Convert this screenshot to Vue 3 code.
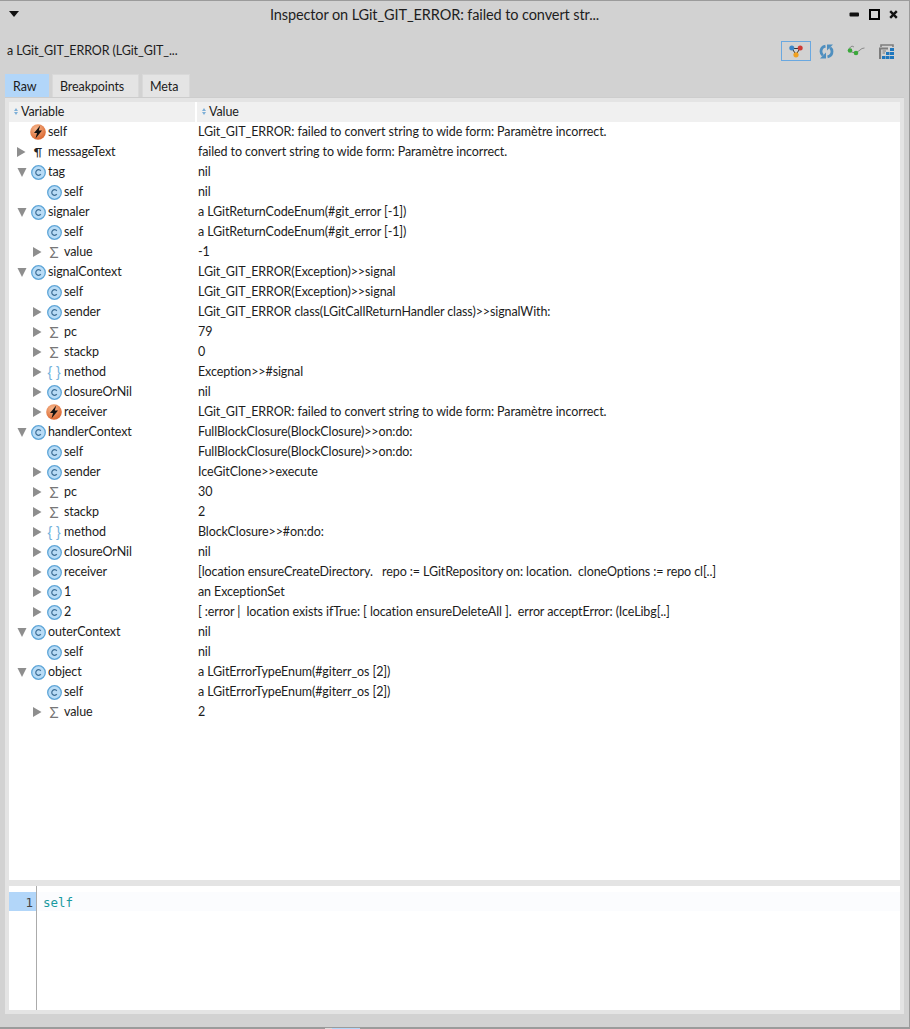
<script setup>
const rows = [
  { l: 0, a: '', i: 'err', n: 'self', v: 'LGit_GIT_ERROR: failed to convert string to wide form: Paramètre incorrect.' },
  { l: 0, a: 'r', i: 'para', n: 'messageText', v: 'failed to convert string to wide form: Paramètre incorrect.' },
  { l: 0, a: 'd', i: 'c', n: 'tag', v: 'nil' },
  { l: 1, a: '', i: 'c', n: 'self', v: 'nil' },
  { l: 0, a: 'd', i: 'c', n: 'signaler', v: 'a LGitReturnCodeEnum(#git_error [-1])' },
  { l: 1, a: '', i: 'c', n: 'self', v: 'a LGitReturnCodeEnum(#git_error [-1])' },
  { l: 1, a: 'r', i: 'sum', n: 'value', v: '-1' },
  { l: 0, a: 'd', i: 'c', n: 'signalContext', v: 'LGit_GIT_ERROR(Exception)>>signal' },
  { l: 1, a: '', i: 'c', n: 'self', v: 'LGit_GIT_ERROR(Exception)>>signal' },
  { l: 1, a: 'r', i: 'c', n: 'sender', v: 'LGit_GIT_ERROR class(LGitCallReturnHandler class)>>signalWith:' },
  { l: 1, a: 'r', i: 'sum', n: 'pc', v: '79' },
  { l: 1, a: 'r', i: 'sum', n: 'stackp', v: '0' },
  { l: 1, a: 'r', i: 'br', n: 'method', v: 'Exception>>#signal' },
  { l: 1, a: 'r', i: 'c', n: 'closureOrNil', v: 'nil' },
  { l: 1, a: 'r', i: 'err', n: 'receiver', v: 'LGit_GIT_ERROR: failed to convert string to wide form: Paramètre incorrect.' },
  { l: 0, a: 'd', i: 'c', n: 'handlerContext', v: 'FullBlockClosure(BlockClosure)>>on:do:' },
  { l: 1, a: '', i: 'c', n: 'self', v: 'FullBlockClosure(BlockClosure)>>on:do:' },
  { l: 1, a: 'r', i: 'c', n: 'sender', v: 'IceGitClone>>execute' },
  { l: 1, a: 'r', i: 'sum', n: 'pc', v: '30' },
  { l: 1, a: 'r', i: 'sum', n: 'stackp', v: '2' },
  { l: 1, a: 'r', i: 'br', n: 'method', v: 'BlockClosure>>#on:do:' },
  { l: 1, a: 'r', i: 'c', n: 'closureOrNil', v: 'nil' },
  { l: 1, a: 'r', i: 'c', n: 'receiver', v: '[location ensureCreateDirectory.   repo := LGitRepository on: location.  cloneOptions := repo cl[..]' },
  { l: 1, a: 'r', i: 'c', n: '1', v: 'an ExceptionSet' },
  { l: 1, a: 'r', i: 'c', n: '2', v: '[ :error |  location exists ifTrue: [ location ensureDeleteAll ].  error acceptError: (IceLibg[..]' },
  { l: 0, a: 'd', i: 'c', n: 'outerContext', v: 'nil' },
  { l: 1, a: '', i: 'c', n: 'self', v: 'nil' },
  { l: 0, a: 'd', i: 'c', n: 'object', v: 'a LGitErrorTypeEnum(#giterr_os [2])' },
  { l: 1, a: '', i: 'c', n: 'self', v: 'a LGitErrorTypeEnum(#giterr_os [2])' },
  { l: 1, a: 'r', i: 'sum', n: 'value', v: '2' },
]
const indent = (r) => ({ paddingLeft: 5 + r.l * 16 + 'px' })
</script>

<template>
  <div class="window">
    <header class="titlebar">
      <svg class="menu" width="12" height="7" viewBox="0 0 12 7"><path d="M1 0h10L6 6z" fill="#111" /></svg>
      <div class="title">Inspector on LGit_GIT_ERROR: failed to convert str...</div>
      <div class="controls">
        <svg width="11" height="5" viewBox="0 0 11 5"><rect x="0.5" y="0.5" width="9.5" height="4" rx="1" fill="#111" /></svg>
        <svg width="11" height="11" viewBox="0 0 11 11"><rect x="1" y="1" width="9" height="9" fill="none" stroke="#000" stroke-width="2" /></svg>
        <svg width="9" height="9" viewBox="0 0 9 9"><path d="M1.2 1.2l6.600 6.600M7.800 1.2L1.2 7.800" stroke="#111" stroke-width="2.400" /></svg>
      </div>
    </header>

    <div class="toolbar">
      <div class="subject">a LGit_GIT_ERROR (LGit_GIT_...</div>
      <div class="tools">
        <div class="tool active">
          <svg width="14" height="13" viewBox="0 0 14 13">
            <path d="M3 3.500h8M3 3.500l4 6M11 3.500l-4 6" stroke="#333" stroke-width="1" fill="none" />
            <circle cx="2.800" cy="3" r="2.500" fill="#3a86c8" />
            <circle cx="11.200" cy="3" r="2.500" fill="#cf3a34" />
            <circle cx="7" cy="9.800" r="2.600" fill="#f0a020" />
          </svg>
        </div>
        <svg class="t-sync" width="15" height="15" viewBox="0 0 15 15">
          <path d="M6.500 2.200C3.500 2.800 2 4.900 2 7.500c0 1.600.7 3 1.900 3.900" fill="none" stroke="#4f8fbf" stroke-width="2.800" />
          <path d="M1 14.500h6V8.500z" fill="#4f8fbf" />
          <path d="M8.500 12.800c3-.6 4.500-2.700 4.500-5.300 0-1.600-.7-3-1.900-3.900" fill="none" stroke="#4f8fbf" stroke-width="2.800" />
          <path d="M14 .5H8v6z" fill="#4f8fbf" />
        </svg>
        <svg class="t-glass" width="18" height="12" viewBox="0 0 18 12">
          <path d="M2 3.500L5 1l2 1M9 8l6-4.500 2.500-.5" stroke="#8a8a8a" stroke-width="1" fill="none" />
          <path d="M4.500 7L9 8" stroke="#777" stroke-width="1" />
          <circle cx="3" cy="5.500" r="2.300" fill="#3aa83a" />
          <circle cx="9" cy="8" r="2.300" fill="#3aa83a" />
        </svg>
        <svg class="t-grid" width="15" height="15" viewBox="0 0 15 15">
          <path d="M2 3V1h12v2" fill="none" stroke="#7d7d7d" stroke-width="1.600" />
          <path d="M1 15V4.500h8" fill="none" stroke="#7d7d7d" stroke-width="2.200" />
          <path d="M3.500 7H7M3.500 9H6" stroke="#7d7d7d" stroke-width="1" />
          <path d="M11 4h4v3h-4zM7 8h3.500v3H7zM11 8h4v3h-4zM3 12h3.500v3H3zM7 12h3.500v3H7zM11 12h4v3h-4z" fill="#1f77bd" />
        </svg>
      </div>
    </div>

    <nav class="tabs">
      <div class="tab on">Raw</div>
      <div class="tab bp">Breakpoints</div>
      <div class="tab meta">Meta</div>
    </nav>

    <main class="panel">
      <section class="table">
        <div class="head">
          <div class="hcell first"><span class="sort"><i class="up"></i><i class="down"></i></span>Variable</div>
          <div class="hcell second"><span class="sort"><i class="up"></i><i class="down"></i></span>Value</div>
        </div>
        <div v-for="(r, idx) in rows" :key="idx" class="row">
          <div class="name" :style="indent(r)">
            <span class="arrow">
              <svg v-if="r.a === 'r'" width="9" height="10" viewBox="0 0 9 10"><path d="M0 0l8.500 5L0 10z" fill="#8e8e8e" /></svg>
              <svg v-else-if="r.a === 'd'" width="10" height="9" viewBox="0 0 10 9"><path d="M.5 0h9L5 9z" fill="#8e8e8e" /></svg>
            </span>
            <span class="icon">
              <svg v-if="r.i === 'c'" width="15" height="15" viewBox="0 0 15 15">
                <circle cx="7.500" cy="7.500" r="6.800" fill="#b9dcf6" stroke="#5da5d8" stroke-width="1.300" />
                <path d="M9.800 5.800A2.800 2.800 0 1 0 9.800 9.200" fill="none" stroke="#3f6f96" stroke-width="1.200" />
              </svg>
              <svg v-else-if="r.i === 'err'" width="16" height="16" viewBox="0 0 16 16">
                <defs>
                  <radialGradient :id="'g' + idx" cx="40%" cy="30%" r="75%">
                    <stop offset="0" stop-color="#f8b98f" />
                    <stop offset="1" stop-color="#d9622a" />
                  </radialGradient>
                </defs>
                <circle cx="8" cy="8" r="7.800" :fill="'url(#g' + idx + ')'" />
                <path d="M10.200 1.500L4 9h3L5.500 14.500 12 6.500H8.800z" fill="#111" />
              </svg>
              <span v-else-if="r.i === 'para'" class="g para">¶</span>
              <span v-else-if="r.i === 'sum'" class="g sum">Σ</span>
              <span v-else class="g br">{ }</span>
            </span>
            <span class="label">{{ r.n }}</span>
          </div>
          <div class="value">{{ r.v }}</div>
        </div>
      </section>

      <section class="editor">
        <div class="gutter"><div class="num">1</div></div>
        <div class="code"><div class="line">self</div></div>
      </section>
    </main>
    <div class="mark"><i></i><b></b></div>
  </div>
</template>

<style scoped>
.window {
  position: relative;
  width: 910px;
  height: 1029px;
  box-sizing: border-box;
  display: flex;
  flex-direction: column;
  background: #d2d2d2;
  border-top: 1px solid #9b9b9b;
  border-right: 1px solid #9b9b9b;
  border-bottom: 2px solid #9b9b9b;
  font-family: Lato, "Open Sans", sans-serif;
  font-size: 12.500px;
  letter-spacing: -0.1px;
  color: #1c1c1c;
}
.titlebar {
  height: 27px;
  display: flex;
  align-items: center;
  padding: 0 11px 0 8px;
  flex: none;
}
.menu { flex: none; }
.title {
  flex: 1;
  text-align: center;
  font-size: 14.500px;
  color: #1e1e1e;
}
.controls {
  display: flex;
  align-items: center;
  gap: 9px;
}
.toolbar {
  height: 46px;
  flex: none;
  display: flex;
  align-items: center;
  justify-content: space-between;
  padding: 0 15px 0 7px;
}
.subject { padding-bottom: 2px; }
.tools {
  display: flex;
  align-items: center;
}
.tool {
  width: 30px;
  height: 20px;
  box-sizing: border-box;
  border: 1px solid #6aa8e0;
  display: flex;
  align-items: center;
  justify-content: center;
}
.t-sync { margin-left: 8px; }
.t-glass { margin-left: 13px; }
.t-grid { margin-left: 14px; }
.tabs {
  height: 23px;
  flex: none;
  display: flex;
  gap: 3px;
  padding-left: 5px;
}
.tab {
  background: #e4e4e4;
  border: 1px solid #d9d9d9;
  border-bottom: none;
  box-sizing: border-box;
  padding-left: 7px;
  line-height: 24px;
}
.tab.on { width: 44px; background: #b2d6f9; border-color: #b2d6f9; }
.tab.bp { width: 87px; }
.tab.meta { width: 48px; }
.panel {
  flex: 1;
  margin: 0 5px 13px;
  padding: 4px 4px 4px;
  background: #e4e4e4;
  border-top: 1px solid #cdcdcd;
  display: flex;
  flex-direction: column;
  gap: 6px;
  min-height: 0;
}
.table {
  height: 778px;
  flex: none;
  background: #fff;
}
.head {
  height: 20px;
  display: flex;
  gap: 2px;
  background: #fff;
}
.hcell {
  background: #f0f0f0;
  display: flex;
  align-items: center;
  box-sizing: border-box;
  padding-bottom: 1px;
  line-height: 19px;
}
.hcell.first { width: 186px; padding-left: 5px; }
.hcell.second { flex: 1; padding-left: 5px; }
.sort {
  width: 7px;
  display: flex;
  flex-direction: column;
  gap: 1px;
  align-items: flex-start;
}
.sort i { display: block; width: 0; height: 0; border-left: 2px solid transparent; border-right: 2px solid transparent; }
.sort .up { border-bottom: 3px solid #7fb0d8; }
.sort .down { border-top: 3px solid #7fb0d8; }
.row {
  height: 20px;
  display: flex;
  gap: 2px;
  line-height: 19px;
}
.name {
  width: 186px;
  box-sizing: border-box;
  display: flex;
  align-items: center;
}
.arrow {
  width: 16px;
  flex: none;
  height: 20px;
  display: flex;
  align-items: center;
  padding-left: 3px;
  box-sizing: border-box;
}
.icon {
  width: 16px;
  height: 20px;
  flex: none;
  display: flex;
  align-items: center;
  justify-content: center;
}
.label { margin-left: 2px; align-self: flex-start; }
.g { line-height: 20px; }
.para { font-size: 12px; color: #222; }
.sum { font-size: 15px; color: #777; }
.br { font-size: 14px; color: #74b2dc; white-space: pre; font-family: "Liberation Sans", sans-serif; }
.value {
  flex: 1;
  padding-left: 1px;
  white-space: pre;
  overflow: hidden;
}
.editor {
  flex: 1;
  background: #fff;
  display: flex;
  min-height: 0;
}
.gutter {
  width: 27px;
  flex: none;
  border-right: 1px solid #ababab;
  padding-top: 6px;
}
.num {
  height: 19px;
  background: #b2d6f9;
  text-align: right;
  padding-right: 3px;
  line-height: 21px;
  font-family: "DejaVu Sans Mono", monospace;
  font-size: 12.500px;
  letter-spacing: 0;
  color: #444;
}
.code { flex: 1; padding-top: 6px; }
.line {
  height: 19px;
  background: #fbfcfe;
  line-height: 21px;
  padding-left: 6px;
  font-family: "DejaVu Sans Mono", monospace;
  font-size: 12.500px;
  letter-spacing: 0;
  color: #1a9aa0;
}
.mark {
  position: absolute;
  left: 325px;
  bottom: -2px;
  height: 1px;
  display: flex;
}
.mark i { display: block; width: 7px; background: #dcdcdc; }
.mark b { display: block; width: 28px; background: #b2d6f9; }
</style>
